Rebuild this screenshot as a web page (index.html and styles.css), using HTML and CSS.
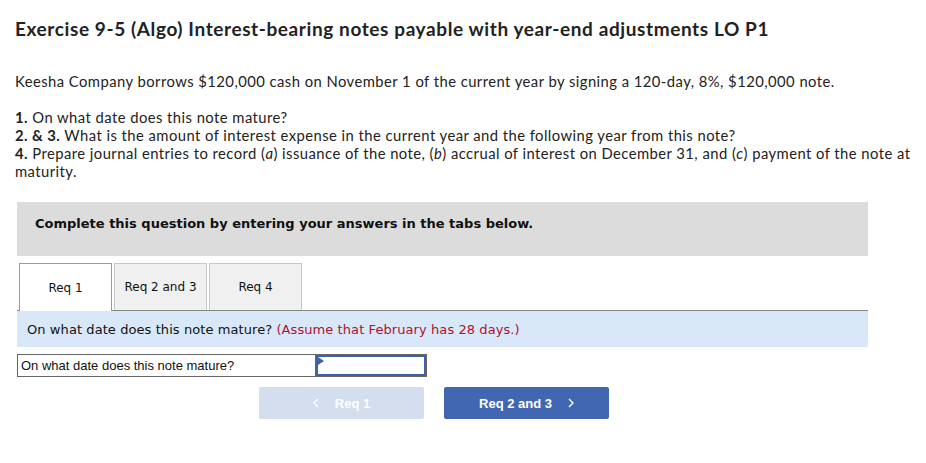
FILE: index.html
```html
<!DOCTYPE html>
<html>
<head>
<meta charset="utf-8">
<link rel="stylesheet" href="styles.css">
</head>
<body>
<div class="page">
  <h1 class="title">Exercise 9-5 (Algo) Interest-bearing notes payable with year-end adjustments LO P1</h1>
  <p class="intro">Keesha Company borrows $120,000 cash on November 1 of the current year by signing a 120-day, 8%, $120,000 note.</p>
  <p class="reqs"><b>1.</b> On what date does this note mature?<br><b>2. &amp; 3.</b> What is the amount of interest expense in the current year and the following year from this note?<br><b>4.</b> Prepare journal entries to record (<i>a</i>) issuance of the note, (<i>b</i>) accrual of interest on December 31, and (<i>c</i>) payment of the note at<br>maturity.</p>

  <div class="panel">
    <div class="instruct">Complete this question by entering your answers in the tabs below.</div>
    <div class="tabs">
      <div class="tab active">Req 1</div>
      <div class="tab">Req 2 and 3</div>
      <div class="tab">Req 4</div>
    </div>
    <div class="question">On what date does this note mature? <span class="note">(Assume that February has 28 days.)</span></div>
    <div class="answer">
      <div class="label">On what date does this note mature?</div>
      <div class="field"><span class="flag"></span></div>
    </div>
    <div class="nav">
      <div class="btn prev"><svg class="chev" width="6" height="10" viewBox="0 0 6 10"><polyline points="5,1 1,5 5,9" fill="none" stroke="#fff" stroke-width="1.4"/></svg>Req 1</div>
      <div class="btn next">Req 2 and 3<svg class="chev r" width="6" height="10" viewBox="0 0 6 10"><polyline points="1,1 5,5 1,9" fill="none" stroke="#fff" stroke-width="1.4"/></svg></div>
    </div>
  </div>
</div>
</body>
</html>
```

FILE: styles.css
```css
* { box-sizing: border-box; }
html, body { margin: 0; padding: 0; background: #fff; }
.page { padding: 0 0 0 15px; width: 926px; color: #222; font-family: Lato, "Open Sans", sans-serif; }
.title { font-size: 19px; letter-spacing: 0.6px; font-weight: 700; margin: 0; padding-top: 17px; line-height: 24px; color: #222; }
.intro { font-size: 14.8px; letter-spacing: 0.45px; line-height: 18px; margin: 31px 0 0 0; }
.reqs { font-size: 14.8px; letter-spacing: 0.45px; line-height: 18px; margin: 18px 0 0 0; }
.reqs b { font-weight: 700; }
.panel { margin: 22px 0 0 2px; width: 851px; }
.instruct { background: #dcdcdc; height: 54px; padding: 14px 0 0 18px; font-family: "DejaVu Sans", Verdana, sans-serif; font-weight: 700; font-size: 13px; line-height: 16px; color: #111; }
.tabs { display: flex; gap: 2px; margin-top: 7px; padding-left: 2px; border-bottom: 1px solid #888; }
.tab { width: 93px; height: 47px; display: flex; align-items: center; justify-content: center; background: #f0f0f0; border: 1px solid #c8c8c8; border-bottom: none; font-family: "DejaVu Sans", Verdana, sans-serif; font-size: 12px; color: #111; }
.tab.active { background: #fff; border-color: #999; height: 48px; margin-bottom: -1px; }
.question { background: #d8e8f8; height: 36px; padding: 11px 0 0 10px; font-family: "DejaVu Sans", Verdana, sans-serif; font-size: 13px; letter-spacing: 0.08px; color: #111; }
.note { color: #b01030; }
.answer { display: flex; margin-top: 7px; width: 410px; height: 23px; border: 1px solid #666; }
.label { width: 298px; border-right: 1px solid #666; font-family: "Liberation Sans", Arial, sans-serif; font-size: 13px; padding: 3px 0 0 3px; color: #111; }
.field { position: relative; flex: 1; border: 2px solid #3e62a8; }
.flag { position: absolute; left: 0; top: 0; width: 0; height: 0; border-top: 4px solid transparent; border-bottom: 4px solid transparent; border-left: 6px solid #3e62a8; }
.nav { display: flex; gap: 20px; margin: 10px 0 0 242px; }
.btn { width: 165px; height: 32px; border-radius: 2px; display: flex; align-items: center; justify-content: center; font-family: "Liberation Sans", Arial, sans-serif; font-weight: 700; font-size: 13px; color: #fff; }
.prev { background: #d4deee; }
.next { background: #4267b2; }
.chev { display: block; margin-right: 16px; }
.chev.r { margin: 0 0 0 16px; }
```
